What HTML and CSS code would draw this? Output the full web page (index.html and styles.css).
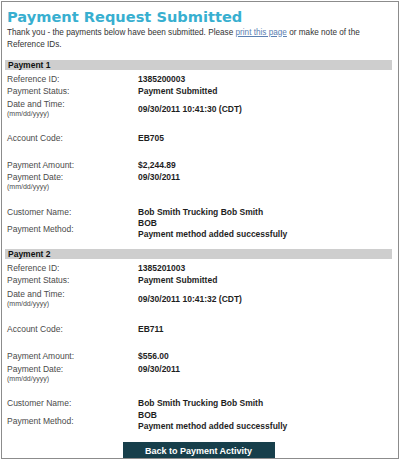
FILE: index.html
```html
<!DOCTYPE html>
<html>
<head>
<meta charset="utf-8">
<link rel="stylesheet" href="styles.css">
</head>
<body>
<div class="page">
  <h1 class="title">Payment Request Submitted</h1>
  <p class="intro">Thank you - the payments below have been submitted. Please <a class="link" href="#">print this page</a> or make note of the Reference IDs.</p>

  <section class="payment">
    <div class="bar">Payment 1</div>
    <div class="row first"><div class="label">Reference ID:</div><div class="value">1385200003</div></div>
    <div class="row"><div class="label">Payment Status:</div><div class="value">Payment Submitted</div></div>
    <div class="row dt"><div class="label">Date and Time:<span class="sub">(mm/dd/yyyy)</span></div><div class="value">09/30/2011 10:41:30 (CDT)</div></div>
    <div class="row gap after-dt"><div class="label">Account Code:</div><div class="value">EB705</div></div>
    <div class="row gap"><div class="label">Payment Amount:</div><div class="value">$2,244.89</div></div>
    <div class="row top"><div class="label">Payment Date:<span class="sub">(mm/dd/yyyy)</span></div><div class="value">09/30/2011</div></div>
    <div class="row gap"><div class="label">Customer Name:</div><div class="value">Bob Smith Trucking Bob Smith</div></div>
    <div class="row method"><div class="label">Payment Method:</div><div class="value">BOB<br>Payment method added successfully</div></div>
  </section>

  <section class="payment second">
    <div class="bar">Payment 2</div>
    <div class="row first"><div class="label">Reference ID:</div><div class="value">1385201003</div></div>
    <div class="row"><div class="label">Payment Status:</div><div class="value">Payment Submitted</div></div>
    <div class="row dt"><div class="label">Date and Time:<span class="sub">(mm/dd/yyyy)</span></div><div class="value">09/30/2011 10:41:32 (CDT)</div></div>
    <div class="row gap after-dt"><div class="label">Account Code:</div><div class="value">EB711</div></div>
    <div class="row gap"><div class="label">Payment Amount:</div><div class="value">$556.00</div></div>
    <div class="row top"><div class="label">Payment Date:<span class="sub">(mm/dd/yyyy)</span></div><div class="value">09/30/2011</div></div>
    <div class="row gap"><div class="label">Customer Name:</div><div class="value">Bob Smith Trucking Bob Smith</div></div>
    <div class="row method"><div class="label">Payment Method:</div><div class="value">BOB<br>Payment method added successfully</div></div>
  </section>

  <div class="actions"><button class="btn" type="button">Back to Payment Activity</button></div>
</div>
</body>
</html>
```
FILE: styles.css
```css
html, body {
  margin: 0;
  padding: 0;
  background: #ffffff;
}
body {
  font-family: "Liberation Sans", Arial, sans-serif;
  color: #222;
}
.page {
  box-sizing: border-box;
  width: 398px;
  height: 458px;
  margin: 1px;
  border: 1px solid #8c8c8c;
  padding: 0 6px 0 3px;
  overflow: hidden;
}
.title {
  margin: 6px 0 0 2px;
  font-family: "DejaVu Sans", Verdana, sans-serif;
  font-weight: bold;
  font-size: 14.6px;
  line-height: 18px;
  color: #38afd0;
}
.intro {
  margin: 0.5px 0 0 2px;
  font-size: 8.2px;
  line-height: 12px;
  color: #333;
}
.link {
  color: #5b80b2;
  text-decoration: underline;
}
.payment {
  margin-top: 9.5px;
}
.payment + .payment {
  margin-top: 8.5px;
}
.bar {
  background: #cecece;
  height: 10px;
  line-height: 10px;
  padding-left: 3px;
  font-size: 8.5px;
  font-weight: bold;
  color: #111;
}
.row {
  display: grid;
  grid-template-columns: 131px 1fr;
  align-items: center;
  padding-left: 2px;
  margin-top: 0;
  font-size: 8.5px;
  line-height: 12px;
}
.row.first {
  margin-top: 2.5px;
}
.row.dt {
  margin-top: 1.5px;
}
.row.dt .value {
  padding-top: 2px;
}
.row.gap {
  margin-top: 15px;
}
.row.gap.after-dt {
  margin-top: 14px;
}
.second .row {
  margin-top: 0.5px;
}
.second .row.first {
  margin-top: 3px;
}
.second .row.dt {
  margin-top: 2px;
}
.second .row.gap {
  margin-top: 15.5px;
}
.second .row.gap.after-dt {
  margin-top: 14.5px;
}
.second .row.gap:nth-last-child(2) {
  margin-top: 14.5px;
}
.row.top {
  align-items: start;
}
.row.method .value {
  line-height: 11px;
}
.label {
  color: #4a4a4a;
}
.sub {
  display: block;
  font-size: 7px;
  line-height: 8px;
}
.value {
  font-weight: bold;
  color: #1e1e1e;
}
.actions {
  display: flex;
  justify-content: center;
  margin-top: 10.5px;
}
.btn {
  width: 152px;
  height: 17px;
  border: none;
  background: #173f4b;
  color: #fff;
  font-family: "Liberation Sans", Arial, sans-serif;
  font-weight: bold;
  font-size: 9px;
  padding: 0;
  line-height: 16px;
  text-align: center;
}
```
